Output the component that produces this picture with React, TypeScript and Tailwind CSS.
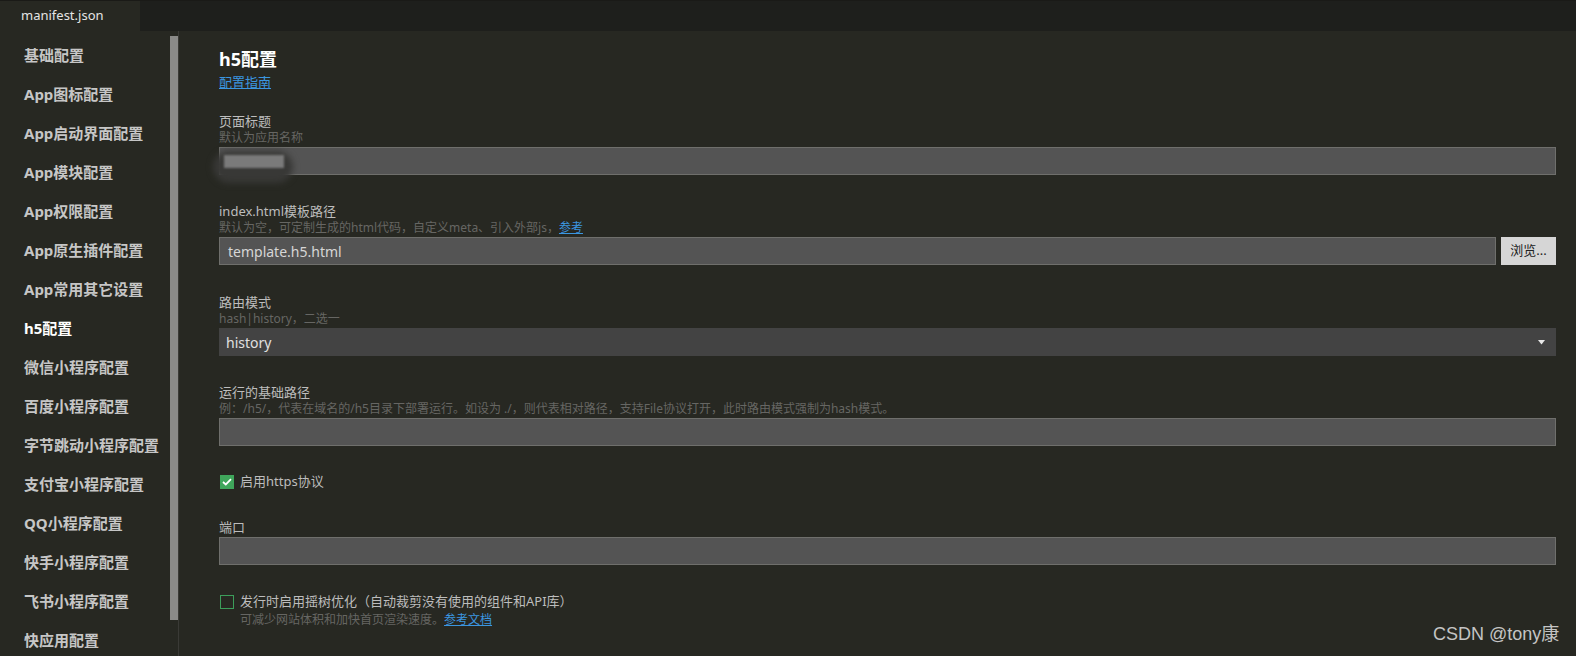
import React from "react";

const items = [
  "基础配置",
  "App图标配置",
  "App启动界面配置",
  "App模块配置",
  "App权限配置",
  "App原生插件配置",
  "App常用其它设置",
  "h5配置",
  "微信小程序配置",
  "百度小程序配置",
  "字节跳动小程序配置",
  "支付宝小程序配置",
  "QQ小程序配置",
  "快手小程序配置",
  "飞书小程序配置",
  "快应用配置",
];

const font = { fontFamily: '"Noto Sans", "Noto Sans CJK SC", sans-serif' };

function Label({ children }: { children: React.ReactNode }) {
  return <div className="text-[13px] leading-[17px] text-[#bdbdbd]">{children}</div>;
}
function Hint({ children }: { children: React.ReactNode }) {
  return <div className="text-[12px] leading-[16px] text-[#666663] whitespace-nowrap">{children}</div>;
}
function Input({ children }: { children?: React.ReactNode }) {
  return (
    <div className="relative mt-px h-[28px] bg-[#545454] border border-[#6f6f6c] flex items-center pl-[8px] text-[14px] text-[#d6d6d6]">
      {children}
    </div>
  );
}

export default function App() {
  return (
    <div className="relative w-[1576px] h-[656px] overflow-hidden bg-[#272822] flex flex-col" style={font}>
      {/* tab bar */}
      <div className="h-[31px] flex bg-[#1e1f1c] border-t border-[#1a1a17] shrink-0">
        <div className="w-[140px] bg-[#272822] flex items-center pl-[21px] text-[13px] text-[#e4e4e4]">manifest.json</div>
      </div>
      <div className="flex flex-1 min-h-0">
        {/* sidebar */}
        <div className="w-[179px] shrink-0 flex border-r border-[#3a3a36]">
          <div className="w-[170px] pt-[5px] flex flex-col">
            {items.map((it) => (
              <div
                key={it}
                className={
                  "h-[39px] shrink-0 flex items-center pl-[24px] text-[15px] font-bold whitespace-nowrap " +
                  (it === "h5配置" ? "text-white" : "text-[#c6c6c6]")
                }
              >
                {it}
              </div>
            ))}
          </div>
          <div className="w-[8px] pt-[5px]">
            <div className="h-[584px] bg-[#8a8a88]" />
          </div>
        </div>
        {/* content */}
        <div className="flex-1 pl-[40px] pr-[20px] pt-[16px] flex flex-col">
          <div className="text-[18px] leading-[24px] font-bold text-white">h5配置</div>
          <div className="mt-[2px] text-[13px] leading-[18px] text-[#3b96e0] underline">配置指南</div>

          <div className="mt-[22px]">
            <Label>页面标题</Label>
            <Hint>默认为应用名称</Hint>
            <Input>
              <div className="absolute left-[-7px] top-[3px] w-[80px] h-[32px] rounded-full bg-[#383836] blur-[3px]" />
              <div className="absolute left-[4px] top-[7px] w-[60px] h-[13px] bg-[#7a7a7a] blur-[1px]" />
            </Input>
          </div>

          <div className="mt-[28px]">
            <Label>index.html模板路径</Label>
            <Hint>
              默认为空，可定制生成的html代码，自定义meta、引入外部js，
              <span className="text-[#3b96e0] underline">参考</span>
            </Hint>
            <div className="mt-px flex gap-[5px]">
              <div className="flex-1 h-[28px] bg-[#545454] border border-[#6f6f6c] flex items-center pl-[8px] text-[14px] text-[#d6d6d6]">
                template.h5.html
              </div>
              <div className="w-[55px] h-[28px] bg-[#d6d6d6] flex items-center justify-center text-[13px] text-[#222]">浏览...</div>
            </div>
          </div>

          <div className="mt-[29px]">
            <Label>路由模式</Label>
            <Hint>hash|history，二选一</Hint>
            <div className="mt-px h-[28px] bg-[#434343] flex items-center pl-[7px] pr-[11px] text-[14px] text-[#e0e0e0]">
              <span className="flex-1">history</span>
              <svg width="7" height="5" viewBox="0 0 7 5">
                <path d="M0 0H7L3.5 4.5Z" fill="#e8e8e8" />
              </svg>
            </div>
          </div>

          <div className="mt-[28px]">
            <Label>运行的基础路径</Label>
            <Hint>例：/h5/，代表在域名的/h5目录下部署运行。如设为 ./，则代表相对路径，支持File协议打开，此时路由模式强制为hash模式。</Hint>
            <Input />
          </div>

          <div className="mt-[27px] flex items-center h-[18px] pl-px">
            <div className="w-[14px] h-[14px] bg-[#3fa65b] flex items-center justify-center">
              <svg width="10" height="8" viewBox="0 0 10 8">
                <path d="M1 4L3.8 6.5L9 1.2" stroke="#fff" strokeWidth="1.8" fill="none" />
              </svg>
            </div>
            <span className="ml-[6px] text-[13px] text-[#bdbdbd]">启用https协议</span>
          </div>

          <div className="mt-[28px]">
            <Label>端口</Label>
            <Input />
          </div>

          <div className="mt-[28px] pl-px">
            <div className="flex items-center h-[18px]">
              <div className="w-[14px] h-[14px] border border-[#3c9d5a]" />
              <span className="ml-[6px] text-[13px] text-[#bdbdbd]">发行时启用摇树优化（自动裁剪没有使用的组件和API库）</span>
            </div>
            <div className="mt-px ml-[20px] text-[12px] leading-[16px] text-[#666663]">
              可减少网站体积和加快首页渲染速度。<span className="text-[#3b96e0] underline">参考文档</span>
            </div>
          </div>
        </div>
      </div>
      <div
        className="absolute left-[1433px] top-[622px] text-[18px] leading-[24px] text-[#c4c4c4] whitespace-nowrap"
        style={{ fontFamily: '"Liberation Sans", "Noto Sans CJK SC", sans-serif' }}
      >
        CSDN @tony康
      </div>
    </div>
  );
}
